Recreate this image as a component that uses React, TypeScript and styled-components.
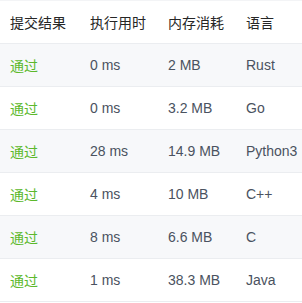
import React from "react";
import styled, { createGlobalStyle } from "styled-components";

interface Submission {
  status: string;
  runtime: string;
  memory: string;
  lang: string;
}

const submissions: Submission[] = [
  { status: "通过", runtime: "0 ms", memory: "2 MB", lang: "Rust" },
  { status: "通过", runtime: "0 ms", memory: "3.2 MB", lang: "Go" },
  { status: "通过", runtime: "28 ms", memory: "14.9 MB", lang: "Python3" },
  { status: "通过", runtime: "4 ms", memory: "10 MB", lang: "C++" },
  { status: "通过", runtime: "8 ms", memory: "6.6 MB", lang: "C" },
  { status: "通过", runtime: "1 ms", memory: "38.3 MB", lang: "Java" },
];

const GlobalStyle = createGlobalStyle`
  body {
    margin: 0;
    background: #ffffff;
    font-family: "Liberation Sans", "Noto Sans CJK SC", sans-serif;
  }
`;

const App = (): JSX.Element => {
  return (
    <>
      <GlobalStyle />
      <Table>
        <HeadRow>
          <HeadCell>提交结果</HeadCell>
          <HeadCell>执行用时</HeadCell>
          <HeadCell>内存消耗</HeadCell>
          <HeadCell>语言</HeadCell>
        </HeadRow>
        {submissions.map((item, index) => (
          <Row key={item.lang} $striped={index % 2 === 0}>
            <Status>{item.status}</Status>
            <Cell>{item.runtime}</Cell>
            <Cell>{item.memory}</Cell>
            <Cell>{item.lang}</Cell>
          </Row>
        ))}
      </Table>
    </>
  );
};

const Table = styled.div`
  display: flex;
  flex-direction: column;
  width: 302px;
  border-top: 1px solid #f3f4f6;
`;

const BaseRow = styled.div`
  display: grid;
  grid-template-columns: 80px 78px 78px 1fr;
  align-items: center;
  height: 42px;
  padding-left: 10px;
  border-bottom: 1px solid #ebedf0;
  font-size: 14px;
`;

const HeadRow = styled(BaseRow)`
  background: #ffffff;
`;

const Row = styled(BaseRow)<{ $striped: boolean }>`
  background: ${({ $striped }) => ($striped ? "#f7f8fa" : "#ffffff")};
`;

const HeadCell = styled.div`
  color: #262626;
  white-space: nowrap;
`;

const Cell = styled.div`
  color: #4a5260;
  white-space: nowrap;
`;

const Status = styled(Cell)`
  color: #5cb82c;
`;

export default App;
